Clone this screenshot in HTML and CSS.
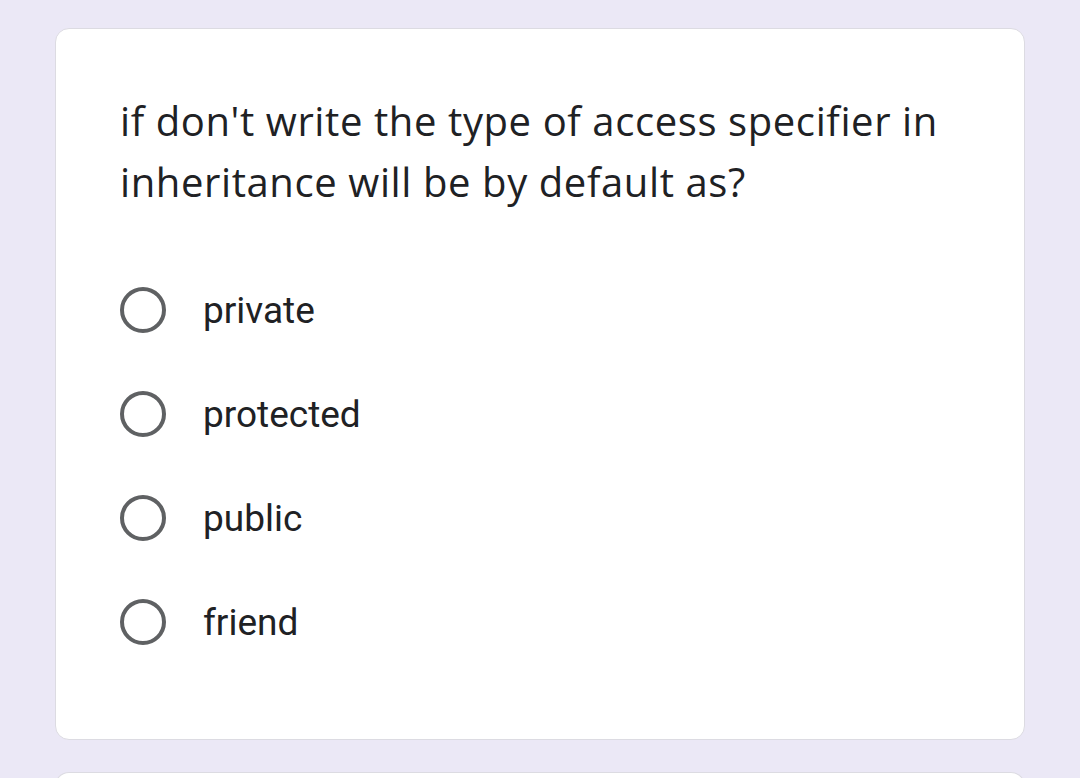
FILE: index.html
```html
<!DOCTYPE html>
<html>
<head>
<meta charset="utf-8">
<link rel="stylesheet" href="styles.css">
</head>
<body>
<div class="page">
  <div class="card">
    <div class="question">if don't write the type of access specifier in inheritance will be by default as?</div>
    <div class="options">
      <div class="option"><span class="radio"></span><span class="label">private</span></div>
      <div class="option"><span class="radio"></span><span class="label">protected</span></div>
      <div class="option"><span class="radio"></span><span class="label">public</span></div>
      <div class="option"><span class="radio"></span><span class="label">friend</span></div>
    </div>
  </div>
  <div class="card next"></div>
</div>
</body>
</html>
```
FILE: styles.css
```css
html, body {
  margin: 0;
  padding: 0;
  background: #ebe8f6;
}
.page {
  padding: 28px 55px 0 55px;
  display: flex;
  flex-direction: column;
  gap: 32px;
  width: 970px;
}
.card {
  background: #ffffff;
  border: 1px solid #dcdbe2;
  border-radius: 14px;
  box-sizing: border-box;
  height: 712px;
  padding: 61px 64px 0 64px;
}
.question {
  font-family: "Open Sans", Roboto, sans-serif;
  font-size: 40px;
  letter-spacing: 0.6px;
  line-height: 61px;
  color: #202124;
  width: 860px;
}
.options {
  margin-top: 75px;
  display: flex;
  flex-direction: column;
  gap: 58px;
}
.option {
  display: flex;
  align-items: center;
  height: 46px;
}
.radio {
  width: 46px;
  height: 46px;
  box-sizing: border-box;
  border: 4px solid #5f6163;
  border-radius: 50%;
  flex: none;
}
.label {
  margin-left: 37px;
  font-family: Roboto, "Liberation Sans", sans-serif;
  font-size: 37px;
  color: #202124;
}
.next {
  height: 5px;
  border-bottom: none;
  border-radius: 14px 14px 0 0;
}
```
